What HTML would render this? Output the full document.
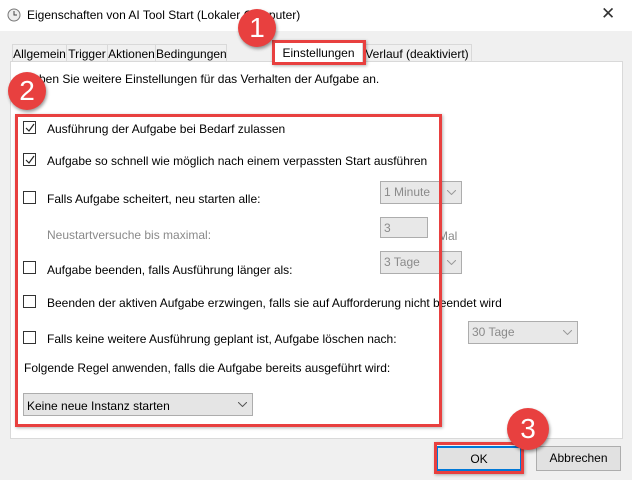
<!DOCTYPE html><html><head><style>
body{margin:0;width:632px;height:480px;background:#f0f0f0;font-family:"Liberation Sans",sans-serif;font-size:12px;color:#000;position:relative;overflow:hidden}
.a{position:absolute;white-space:nowrap}
.cb{position:absolute;width:11px;height:11px;border:1px solid #333;background:#fff}
.ck{position:absolute;left:1px;top:1px}
.dd{position:absolute;border:1px solid #adadad;background:#e8e8e8;color:#8a8a8a;box-sizing:border-box;padding:3px 3px;white-space:nowrap}
.dd svg{position:absolute;right:5px;top:8px}
.tab{position:absolute;top:44px;height:17px;border:1px solid #d9d9d9;border-bottom:none;background:#f0f0f0;padding:2px 0 0;text-align:center;box-sizing:border-box;font-size:12px;white-space:nowrap;overflow:visible}
.btn{position:absolute;border:1px solid #adadad;background:#e1e1e1;text-align:center;box-sizing:border-box;line-height:23px}
.circ{position:absolute;border-radius:50%;background:#e8403f;color:#fff;font-size:28px;text-align:center;box-shadow:1px 2px 3px rgba(0,0,0,.4)}
.red{position:absolute;border:3px solid #e8403f;box-shadow:1px 1px 3px rgba(0,0,0,.3)}
</style></head><body>
<div class="a" style="left:0;top:0;width:632px;height:31px;background:#fff"></div>
<svg class="a" style="left:7px;top:8px" width="14" height="14" viewBox="0 0 14 14"><circle cx="7" cy="7" r="6" fill="#eee" stroke="#777"/><path d="M7 3V7H10" stroke="#444" fill="none"/></svg>
<div class="a" style="left:27px;top:8px">Eigenschaften von AI Tool Start (Lokaler Computer)</div>
<div class="a" style="left:601px;top:4px;font-size:17px;color:#333">✕</div>
<div class="tab" style="left:12px;width:55px">Allgemein</div>
<div class="tab" style="left:66px;width:42px">Trigger</div>
<div class="tab" style="left:107px;width:49px">Aktionen</div>
<div class="tab" style="left:155px;width:72px">Bedingungen</div>
<div class="tab" style="left:362px;width:110px">Verlauf (deaktiviert)</div>
<div class="a" style="left:10px;top:61px;width:611px;height:376px;background:#fff;border:1px solid #d9d9d9"></div>
<div class="tab" style="left:274px;top:41px;height:21px;width:89px;background:#fff;padding-top:4px">Einstellungen</div>
<div class="a" style="left:23px;top:72px">Geben Sie weitere Einstellungen für das Verhalten der Aufgabe an.</div>
<div class="cb" style="left:23px;top:121px"><svg class="ck" width="10" height="10" viewBox="0 0 10 10"><path d="M1 5L4 8L9 1" stroke="#222" stroke-width="1.2" fill="none"/></svg></div>
<div class="a" style="left:47px;top:122px">Ausführung der Aufgabe bei Bedarf zulassen</div>
<div class="cb" style="left:23px;top:153px"><svg class="ck" width="10" height="10" viewBox="0 0 10 10"><path d="M1 5L4 8L9 1" stroke="#222" stroke-width="1.2" fill="none"/></svg></div>
<div class="a" style="left:47px;top:154px">Aufgabe so schnell wie möglich nach einem verpassten Start ausführen</div>
<div class="cb" style="left:23px;top:191px"></div>
<div class="a" style="left:47px;top:192px">Falls Aufgabe scheitert, neu starten alle:</div>
<div class="dd" style="left:380px;top:181px;width:82px;height:23px">1 Minute<svg width="9" height="5"><path d="M0 0L4.5 4.5L9 0" stroke="#999" fill="none"/></svg></div>
<div class="a" style="left:47px;top:228px;color:#8a8a8a">Neustartversuche bis maximal:</div>
<div class="dd" style="left:380px;top:217px;width:48px;height:21px">3</div>
<div class="a" style="left:438px;top:229px;color:#8a8a8a">Mal</div>
<div class="cb" style="left:23px;top:261px"></div>
<div class="a" style="left:47px;top:263px">Aufgabe beenden, falls Ausführung länger als:</div>
<div class="dd" style="left:380px;top:251px;width:82px;height:23px">3 Tage<svg width="9" height="5"><path d="M0 0L4.5 4.5L9 0" stroke="#999" fill="none"/></svg></div>
<div class="cb" style="left:23px;top:295px"></div>
<div class="a" style="left:47px;top:296px">Beenden der aktiven Aufgabe erzwingen, falls sie auf Aufforderung nicht beendet wird</div>
<div class="cb" style="left:23px;top:331px"></div>
<div class="a" style="left:47px;top:332px">Falls keine weitere Ausführung geplant ist, Aufgabe löschen nach:</div>
<div class="dd" style="left:468px;top:321px;width:110px;height:23px">30 Tage<svg width="9" height="5"><path d="M0 0L4.5 4.5L9 0" stroke="#999" fill="none"/></svg></div>
<div class="a" style="left:24px;top:361px">Folgende Regel anwenden, falls die Aufgabe bereits ausgeführt wird:</div>
<div class="dd" style="left:23px;top:393px;width:230px;height:23px;color:#000;background:#e5e5e5;padding-top:5px">Keine neue Instanz starten<svg width="9" height="5"><path d="M0 0L4.5 4.5L9 0" stroke="#555" fill="none"/></svg></div>
<div class="btn" style="left:436px;top:446px;width:86px;height:25px;border:2px solid #0078d7">OK</div>
<div class="btn" style="left:536px;top:446px;width:85px;height:25px">Abbrechen</div>
<div class="red" style="left:272px;top:40px;width:88px;height:19px"></div>
<div class="red" style="left:15px;top:114px;width:421px;height:307px"></div>
<div class="red" style="left:434px;top:442px;width:84px;height:26px"></div>
<div class="circ" style="left:238px;top:9px;width:38px;height:38px;line-height:38px">1</div>
<div class="circ" style="left:8px;top:72px;width:38px;height:38px;line-height:38px">2</div>
<div class="circ" style="left:507px;top:408px;width:42px;height:42px;line-height:42px">3</div>
</body></html>
